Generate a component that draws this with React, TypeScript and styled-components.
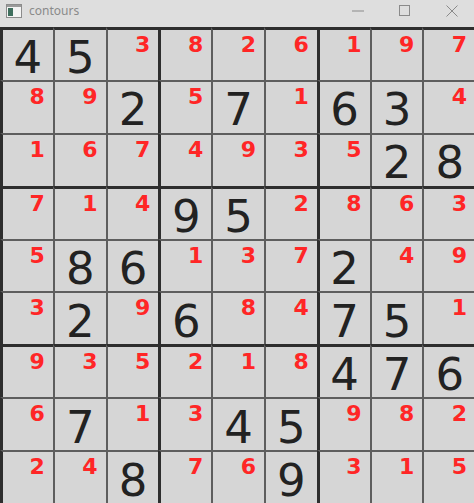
import React from 'react';
import styled, { createGlobalStyle } from 'styled-components';

const Global = createGlobalStyle`
  html, body { margin: 0; padding: 0; background: #d6d6d6; }
  body { width: 474px; height: 503px; overflow: hidden; }
`;

const Window = styled.div`
  width: 474px;
  height: 503px;
  overflow: hidden;
  background: #d6d6d6;
  display: flex;
  flex-direction: column;
`;

const TitleBar = styled.div`
  flex: 0 0 27px;
  width: 475px;
  box-sizing: border-box;
  display: flex;
  align-items: center;
  padding: 0 0 6px 6px;
  background: #dedede;
`;

const AppIcon = styled.svg`
  width: 16px;
  height: 14px;
  flex: none;
`;

const Title = styled.span`
  margin-left: 7px;
  font-family: 'Noto Sans', 'Open Sans', sans-serif;
  font-size: 12px;
  color: #8a8a8a;
  flex: 1;
`;

const WinButton = styled.div`
  width: 47px;
  height: 21px;
  display: flex;
  align-items: center;
  justify-content: center;
  flex: none;
`;

const Board = styled.div`
  flex: none;
  display: grid;
  grid-template-columns: repeat(9, 52.8px);
  grid-template-rows: repeat(9, 52.9px);
`;

const Cell = styled.div<{ $given: boolean; $thickL: boolean; $thickT: boolean }>`
  box-sizing: border-box;
  border-left: ${(p) => (p.$thickL ? '3px solid #2e2e2e' : '2px solid #5e5e5e')};
  border-top: ${(p) => (p.$thickT ? '3px solid #2e2e2e' : '2px solid #5e5e5e')};
  display: flex;
  justify-content: ${(p) => (p.$given ? 'center' : 'flex-end')};
  align-items: ${(p) => (p.$given ? 'center' : 'flex-start')};
  padding: ${(p) => (p.$given ? '5px 0 0 0' : '4px 8px 0 0')};
`;

const GivenDigit = styled.span`
  font-family: 'DejaVu Sans', 'Liberation Sans', sans-serif;
  font-size: 45px;
  line-height: 1;
  color: #222222;
`;

const HintDigit = styled.span`
  font-family: 'DejaVu Sans', 'Liberation Sans', sans-serif;
  font-weight: bold;
  font-size: 22px;
  line-height: 1;
  color: #ff2626;
`;

// 'b' suffix = given (black) digit
const rows: string[][] = [
  ['4b', '5b', '3', '8', '2', '6', '1', '9', '7'],
  ['8', '9', '2b', '5', '7b', '1', '6b', '3b', '4'],
  ['1', '6', '7', '4', '9', '3', '5', '2b', '8b'],
  ['7', '1', '4', '9b', '5b', '2', '8', '6', '3'],
  ['5', '8b', '6b', '1', '3', '7', '2b', '4', '9'],
  ['3', '2b', '9', '6b', '8', '4', '7b', '5b', '1'],
  ['9', '3', '5', '2', '1', '8', '4b', '7b', '6b'],
  ['6', '7b', '1', '3', '4b', '5b', '9', '8', '2'],
  ['2', '4', '8b', '7', '6', '9b', '3', '1', '5'],
];

export default function App() {
  return (
    <>
      <Global />
      <Window>
        <TitleBar>
          <AppIcon viewBox="0 0 16 14">
            <rect x="0.5" y="0.5" width="15" height="13" fill="#f4f4f4" stroke="#8c8c8c" />
            <rect x="1" y="1" width="14" height="2" fill="#9a9a9a" />
            <rect x="2" y="4" width="5" height="8" fill="#3f6f5e" />
          </AppIcon>
          <Title>contours</Title>
          <WinButton>
            <svg width="12" height="2" viewBox="0 0 12 2">
              <rect x="0" y="0.5" width="12" height="1" fill="#8a8a8a" />
            </svg>
          </WinButton>
          <WinButton>
            <svg width="11" height="11" viewBox="0 0 11 11">
              <rect x="0.5" y="0.5" width="10" height="10" fill="none" stroke="#8a8a8a" />
            </svg>
          </WinButton>
          <WinButton>
            <svg width="12" height="12" viewBox="0 0 12 12">
              <path d="M0.5 0.5 L11.5 11.5 M11.5 0.5 L0.5 11.5" stroke="#8a8a8a" strokeWidth="1" />
            </svg>
          </WinButton>
        </TitleBar>
        <Board>
          {rows.map((row, r) =>
            row.map((v, c) => {
              const given = v.endsWith('b');
              const d = v[0];
              return (
                <Cell key={`${r}-${c}`} $given={given} $thickL={c % 3 === 0} $thickT={r % 3 === 0}>
                  {given ? <GivenDigit>{d}</GivenDigit> : <HintDigit>{d}</HintDigit>}
                </Cell>
              );
            })
          )}
        </Board>
      </Window>
    </>
  );
}
